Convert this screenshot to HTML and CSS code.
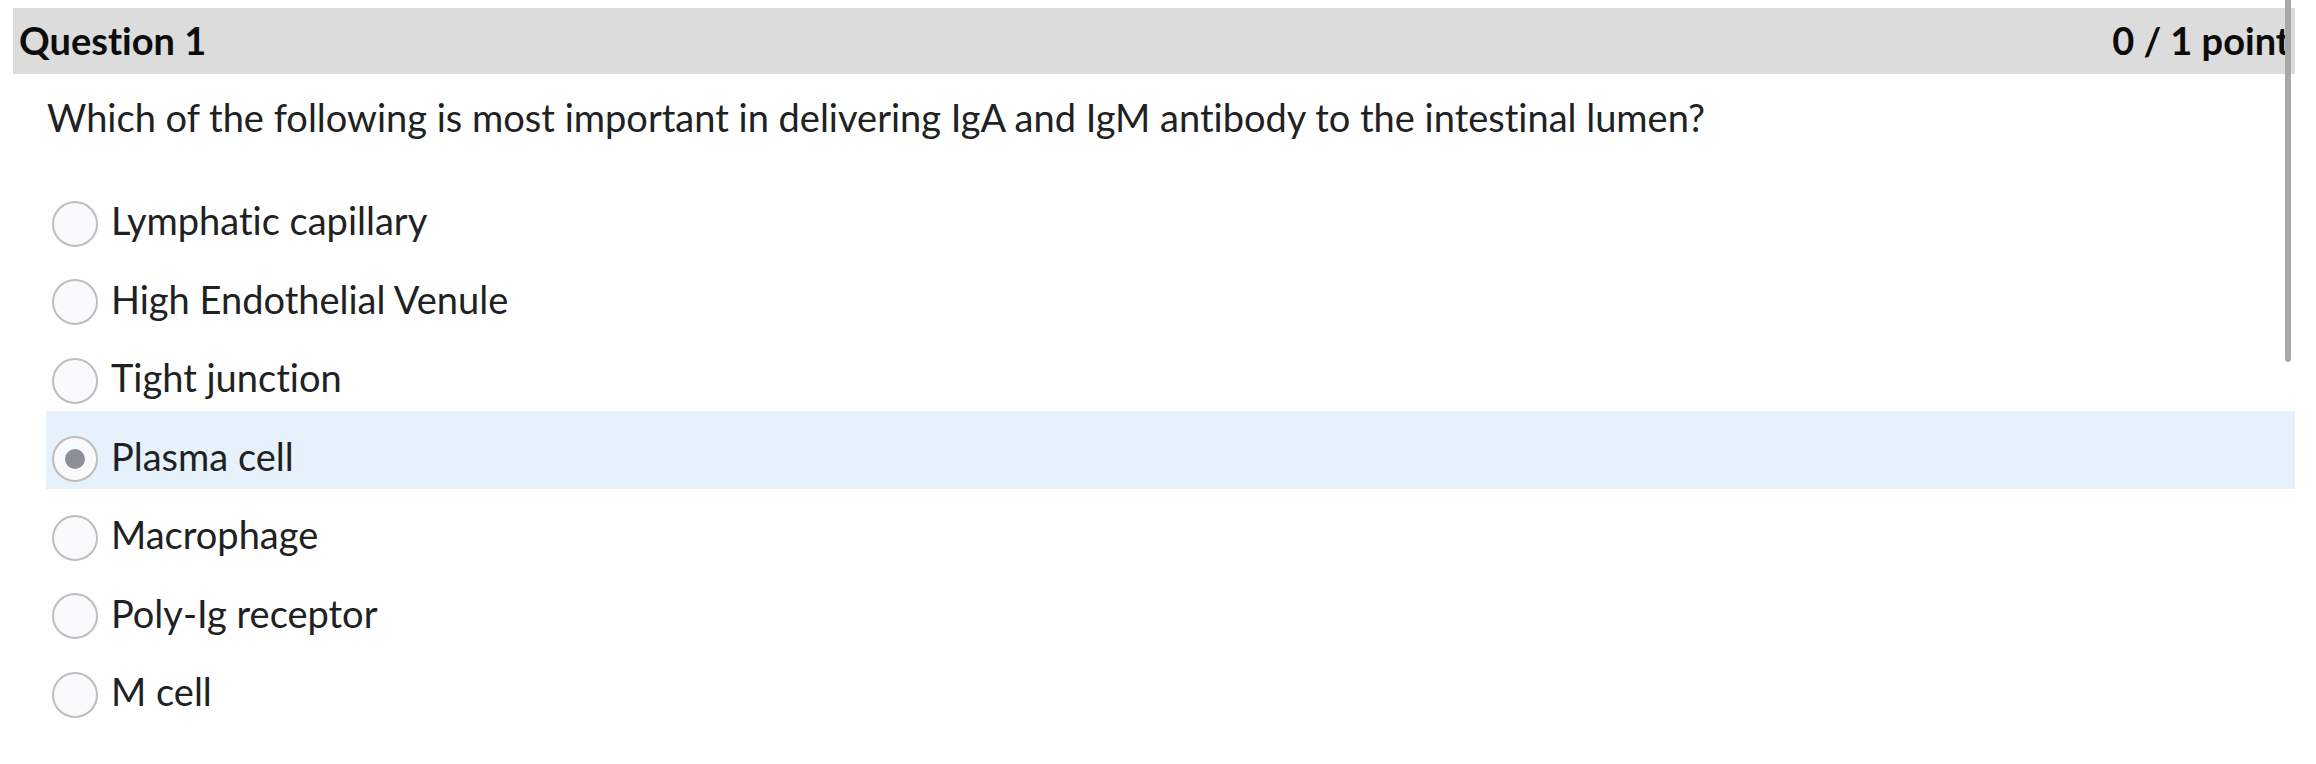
FILE: index.html
```html
<!DOCTYPE html>
<html lang="en">
<head>
<meta charset="utf-8">
<title>Question 1</title>
<link rel="stylesheet" href="styles.css">
</head>
<body>
<div class="quiz">
  <div class="q-header">
    <h2 class="q-title">Question 1</h2>
    <div class="q-points">0 / 1 point</div>
  </div>
  <p class="q-text">Which of the following is most important in delivering IgA and IgM antibody to the intestinal lumen?</p>
  <ul class="options">
    <li class="option"><span class="radio"></span><span class="label">Lymphatic capillary</span></li>
    <li class="option"><span class="radio"></span><span class="label">High Endothelial Venule</span></li>
    <li class="option"><span class="radio"></span><span class="label">Tight junction</span></li>
    <li class="option selected"><span class="radio checked"></span><span class="label">Plasma cell</span></li>
    <li class="option"><span class="radio"></span><span class="label">Macrophage</span></li>
    <li class="option"><span class="radio"></span><span class="label">Poly-Ig receptor</span></li>
    <li class="option"><span class="radio"></span><span class="label">M cell</span></li>
  </ul>
</div>
<div class="scrollbar"></div>
</body>
</html>
```

FILE: styles.css
```css
html, body {
  margin: 0;
  padding: 0;
  background: #ffffff;
}
body {
  font-family: Lato, "Open Sans", "Liberation Sans", sans-serif;
  font-variant-ligatures: none;
  color: #202122;
  overflow: hidden;
}
.quiz {
  padding: 8px 21px 0 13px;
}
.q-header {
  height: 66px;
  background: #dcdcdc;
  display: flex;
  align-items: center;
  justify-content: space-between;
  padding: 0 5px 0 6px;
}
.q-title {
  margin: 0;
  font-size: 38px;
  font-weight: 700;
  color: #0c0c0c;
  line-height: 1.2;
}
.q-points {
  font-size: 38px;
  font-weight: 700;
  color: #0c0c0c;
  line-height: 1.2;
}
.q-text {
  margin: 20.5px 0 0 34px;
  font-size: 38px;
  line-height: 1.2;
}
.options {
  list-style: none;
  margin: 35.4px 0 0 33px;
  padding: 0;
}
.option {
  box-sizing: border-box;
  height: 78.5px;
  padding: 25.5px 0 7px 6px;
  display: flex;
  align-items: center;
  gap: 13px;
  font-size: 38px;
  line-height: 1.2;
}
.option.selected {
  background: #e7f1fb;
}
.radio {
  box-sizing: border-box;
  flex: 0 0 46px;
  width: 46px;
  height: 46px;
  border-radius: 50%;
  border: 2px solid #bdbdbd;
  background: #f9fafc;
  display: flex;
  align-items: center;
  justify-content: center;
}
.radio.checked::after {
  content: "";
  width: 20px;
  height: 20px;
  border-radius: 50%;
  background: #8b9098;
}
.label {
  margin-bottom: 6px;
}
.scrollbar {
  position: absolute;
  top: 0;
  left: 2285px;
  width: 6px;
  height: 362px;
  background: #a8a8a8;
  border-radius: 0 0 3px 3px;
}
```
